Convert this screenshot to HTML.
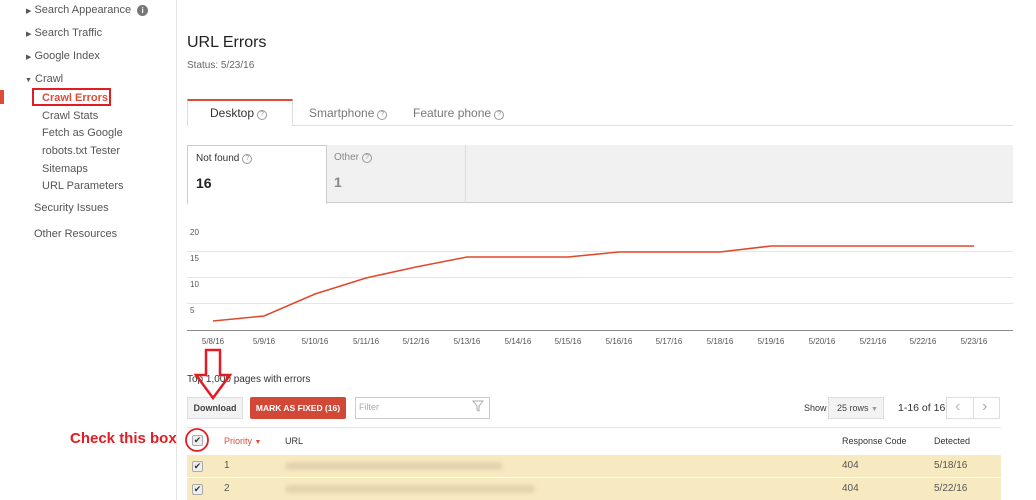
<!DOCTYPE html>
<html><head><style>
*{margin:0;padding:0;box-sizing:border-box}
body{width:1036px;height:500px;overflow:hidden;background:#fff;font-family:"Liberation Sans",Arial,sans-serif;color:#222;position:relative;font-size:11px}
.a{position:absolute;white-space:nowrap}
.side{color:#555;font-size:11px}
.q{display:inline-block;width:10px;height:10px;border:1px solid #999;border-radius:50%;font-size:7px;line-height:8px;text-align:center;color:#999;vertical-align:1px;margin-left:3px}
.cb{position:absolute;width:11px;height:11px;border:1px solid #aaa;background:#eee;border-radius:2px;font-size:9px;line-height:9px;text-align:center;color:#333}
</style></head><body>
<div class="a" style="left:176px;top:0;width:1px;height:500px;background:#e5e5e5"></div>
<div class="a" style="left:0;top:90px;width:4px;height:14px;background:#dd4b39"></div>
<div class="a side" style="left:26px;top:4px"><span style="font-size:7px">▶</span> Search Appearance <span style="display:inline-block;width:11px;height:11px;border-radius:50%;background:#777;color:#fff;font-size:8px;line-height:11px;text-align:center;font-weight:bold;margin-left:3px">i</span></div>
<div class="a side" style="left:26px;top:27px"><span style="font-size:7px">▶</span> Search Traffic</div>
<div class="a side" style="left:26px;top:50px"><span style="font-size:7px">▶</span> Google Index</div>
<div class="a side" style="left:25px;top:73px"><span style="font-size:7px">▼</span> Crawl</div>
<div class="a" style="left:32px;top:88px;width:79px;height:18px;border:2px solid #e21c23"></div>
<div class="a" style="left:42px;top:92px;color:#dd4b39;font-weight:bold;font-size:11px">Crawl Errors</div>
<div class="a side" style="left:42px;top:110px">Crawl Stats</div>
<div class="a side" style="left:42px;top:127px">Fetch as Google</div>
<div class="a side" style="left:42px;top:145px">robots.txt Tester</div>
<div class="a side" style="left:42px;top:163px">Sitemaps</div>
<div class="a side" style="left:42px;top:180px">URL Parameters</div>
<div class="a side" style="left:34px;top:202px">Security Issues</div>
<div class="a side" style="left:34px;top:228px">Other Resources</div>

<div class="a" style="left:187px;top:34px;font-size:16px;color:#222">URL Errors</div>
<div class="a" style="left:187px;top:60px;color:#666;font-size:10px">Status: 5/23/16</div>

<div class="a" style="left:187px;top:125px;width:826px;height:1px;background:#ddd"></div>
<div class="a" style="left:187px;top:99px;width:106px;height:27px;border:1px solid #ddd;border-top:2px solid #dd4b39;border-bottom:none;background:#fff"></div>
<div class="a" style="left:210px;top:106px;font-size:12px;color:#333">Desktop<span class="q">?</span></div>
<div class="a" style="left:309px;top:106px;font-size:12px;color:#777">Smartphone<span class="q">?</span></div>
<div class="a" style="left:413px;top:106px;font-size:12px;color:#777">Feature phone<span class="q">?</span></div>

<div class="a" style="left:187px;top:145px;width:826px;height:58px;background:#f1f1f1;border-bottom:1px solid #ccc"></div>
<div class="a" style="left:465px;top:145px;width:1px;height:58px;background:#ddd"></div>
<div class="a" style="left:187px;top:145px;width:140px;height:59px;background:#fff;border:1px solid #ccc;border-bottom:none"></div>
<div class="a" style="left:196px;top:153px;font-size:10px;color:#333">Not found<span class="q">?</span></div>
<div class="a" style="left:196px;top:175px;font-size:14px;font-weight:bold;color:#222">16</div>
<div class="a" style="left:334px;top:152px;font-size:10px;color:#888">Other<span class="q">?</span></div>
<div class="a" style="left:334px;top:174px;font-size:14px;font-weight:bold;color:#888">1</div>

<svg class="a" style="left:0;top:0" width="1036" height="500">
<g stroke="#e5e5e5" stroke-width="1">
<line x1="187" y1="251.5" x2="1013" y2="251.5"/><line x1="187" y1="277.5" x2="1013" y2="277.5"/><line x1="187" y1="303.5" x2="1013" y2="303.5"/></g>
<line x1="187" y1="330.5" x2="1013" y2="330.5" stroke="#888"/>
<g font-size="8" fill="#555" font-family="Liberation Sans,sans-serif">
<text x="190" y="235">20</text><text x="190" y="261">15</text><text x="190" y="287">10</text><text x="190" y="313">5</text>
</g>
<polyline fill="none" stroke="#e0492c" stroke-width="1.6" points="213,321 264,316 315,294 366,278 416,267 467,257 518,257 568,257 619,252 669,252 720,252 771,246 822,246 873,246 923,246 974,246"/>
<g font-size="8" fill="#555" font-family="Liberation Sans,sans-serif" text-anchor="middle">
<text x="213" y="344">5/8/16</text><text x="264" y="344">5/9/16</text><text x="315" y="344">5/10/16</text><text x="366" y="344">5/11/16</text><text x="416" y="344">5/12/16</text><text x="467" y="344">5/13/16</text><text x="518" y="344">5/14/16</text><text x="568" y="344">5/15/16</text><text x="619" y="344">5/16/16</text><text x="669" y="344">5/17/16</text><text x="720" y="344">5/18/16</text><text x="771" y="344">5/19/16</text><text x="822" y="344">5/20/16</text><text x="873" y="344">5/21/16</text><text x="923" y="344">5/22/16</text><text x="974" y="344">5/23/16</text>
</g>
</svg>

<div class="a" style="left:187px;top:374px;font-size:10px;color:#333">Top 1,000 pages with errors</div>
<div class="a" style="left:187px;top:397px;width:56px;height:22px;border:1px solid #ddd;background:#f3f3f3;font-size:9px;font-weight:bold;color:#444;text-align:center;line-height:20px">Download</div>
<div class="a" style="left:250px;top:397px;width:96px;height:22px;background:#d14836;border-radius:2px;font-size:8.5px;font-weight:bold;color:#fff;text-align:center;line-height:22px">MARK AS FIXED (16)</div>
<div class="a" style="left:355px;top:397px;width:135px;height:22px;border:1px solid #ccc;font-size:9px;color:#aaa;padding:4px 3px">Filter</div>
<svg class="a" style="left:472px;top:400px" width="12" height="12"><path d="M1 1h10L7 6v5L5 10V6z" fill="none" stroke="#aaa"/></svg>
<div class="a" style="left:804px;top:403px;font-size:9px;color:#333">Show</div>
<div class="a" style="left:828px;top:397px;width:56px;height:22px;border:1px solid #ddd;background:#f3f3f3;font-size:9px;color:#444;line-height:20px;padding-left:8px">25 rows <span style="color:#999;font-size:7px">▼</span></div>
<div class="a" style="left:898px;top:402px;font-size:10.5px;color:#333">1-16 of 16</div>
<div class="a" style="left:946px;top:397px;width:54px;height:22px;border:1px solid #ddd"></div>
<div class="a" style="left:973px;top:397px;width:1px;height:22px;background:#ddd"></div>
<div class="a" style="left:955px;top:398px;font-size:16px;color:#bbb">‹</div>
<div class="a" style="left:982px;top:398px;font-size:16px;color:#aaa">›</div>

<div class="a" style="left:187px;top:427px;width:814px;height:1px;background:#e5e5e5"></div>
<div class="cb" style="left:192px;top:435px">✔</div>
<div class="a" style="left:224px;top:436px;font-size:9px;color:#dd4b39">Priority <span style="font-size:7px">▼</span></div>
<div class="a" style="left:285px;top:436px;font-size:9px;color:#333">URL</div>
<div class="a" style="left:842px;top:436px;font-size:9px;color:#333">Response Code</div>
<div class="a" style="left:934px;top:436px;font-size:9px;color:#333">Detected</div>

<div class="a" style="left:187px;top:455px;width:814px;height:22px;background:#f8eac0"></div>
<div class="a" style="left:187px;top:478px;width:814px;height:22px;background:#f8eac0"></div>
<div class="cb" style="left:192px;top:461px">✔</div>
<div class="cb" style="left:192px;top:484px">✔</div>
<div class="a" style="left:224px;top:460px;font-size:10px;color:#555">1</div>
<div class="a" style="left:224px;top:483px;font-size:10px;color:#555">2</div>
<div class="a" style="left:285px;top:462px;width:218px;height:8px;background:#e2d3ae;border-radius:4px;filter:blur(2px)"></div>
<div class="a" style="left:285px;top:485px;width:250px;height:8px;background:#e2d3ae;border-radius:4px;filter:blur(2px)"></div>
<div class="a" style="left:842px;top:460px;font-size:10px;color:#555">404</div>
<div class="a" style="left:934px;top:460px;font-size:10px;color:#555">5/18/16</div>
<div class="a" style="left:842px;top:483px;font-size:10px;color:#555">404</div>
<div class="a" style="left:934px;top:483px;font-size:10px;color:#555">5/22/16</div>

<div class="a" style="left:70px;top:430px;font-size:15px;font-weight:bold;color:#e21c23">Check this box</div>
<svg class="a" style="left:0;top:0" width="1036" height="500">
<circle cx="197" cy="440" r="11" fill="none" stroke="#e21c23" stroke-width="1.8"/>
<path d="M206 350H220V375H230L213 398L196 375H206Z" fill="none" stroke="#e21c23" stroke-width="2.5" stroke-linejoin="miter"/>
</svg>
</body></html>
